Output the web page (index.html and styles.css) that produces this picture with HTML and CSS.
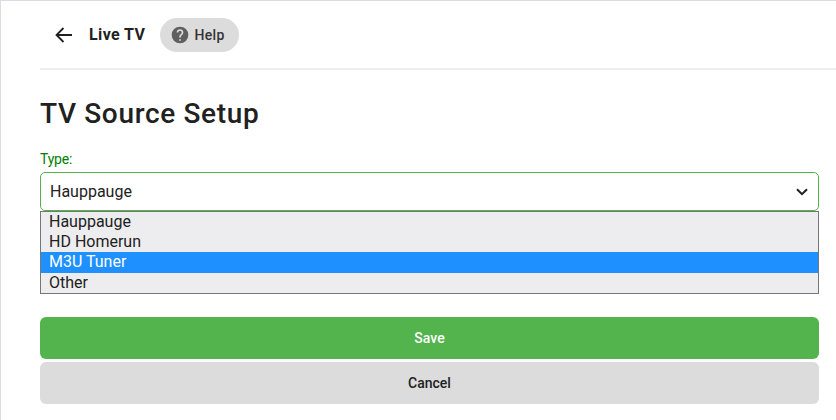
FILE: index.html
```html
<!DOCTYPE html>
<html lang="en">
<head>
<meta charset="utf-8">
<title>TV Source Setup</title>
<link rel="stylesheet" href="styles.css">
</head>
<body>
<div class="page">
  <header class="topbar">
    <button class="back" aria-label="Back">
      <svg width="24" height="24" viewBox="0 0 24 24"><path d="M20 12H4.500M11.500 5l-7 7 7 7" fill="none" stroke="#212121" stroke-width="1.8"/></svg>
    </button>
    <span class="crumb">Live TV</span>
    <button class="help">
      <svg width="20" height="20" viewBox="0 0 24 24"><path fill="#5f5f5f" d="M12 2a10 10 0 1 0 0 20 10 10 0 0 0 0-20zm1 17h-2v-2h2v2zm2.070-7.750-.9.920C13.450 12.900 13 13.500 13 15h-2v-.5c0-1.100.45-2.100 1.170-2.830l1.240-1.260c.37-.36.59-.86.59-1.410a2 2 0 0 0-4 0H8a4 4 0 0 1 8 0c0 .88-.36 1.680-.93 2.250z"/></svg>
      <span>Help</span>
    </button>
  </header>
  <main class="content">
    <h1 class="title">TV Source Setup</h1>
    <label class="type-label">Type:</label>
    <div class="select-wrap">
      <div class="select">
        <span>Hauppauge</span>
        <svg class="chevron" width="12" height="8" viewBox="0 0 12 8"><path d="M1 1.200 6 6.200l5-5" fill="none" stroke="#212121" stroke-width="2"/></svg>
      </div>
      <ul class="options">
        <li class="option">Hauppauge</li>
        <li class="option">HD Homerun</li>
        <li class="option selected">M3U Tuner</li>
        <li class="option">Other</li>
      </ul>
    </div>
    <div class="actions">
      <button class="btn save">Save</button>
      <button class="btn cancel">Cancel</button>
    </div>
  </main>
</div>
</body>
</html>
```
FILE: styles.css
```css
* { box-sizing: border-box; }
html, body { margin: 0; padding: 0; height: 100%; }
body { background: #fff; font-family: Roboto, sans-serif; color: #212121; overflow: hidden; }
.page { height: 420px; border-top: 1px solid #dcdce4; border-left: 1px solid #dcdce4; padding-left: 39px; }
.topbar { border-bottom: 2px solid #ededed; display: flex; align-items: center; padding: 0 0 0 12px; box-sizing: content-box; height: 67px; }
.back { width: 24px; height: 24px; padding: 0; border: 0; background: none; display: flex; margin-right: 13px; }
.crumb { font-size: 16px; font-weight: 700; letter-spacing: 0.4px; }
.help { margin-left: 15px; width: 79px; height: 34px; border: 0; border-radius: 17px; background: #dcdcdc; display: flex; align-items: center; gap: 4px; padding: 0 0 0 10px; font: 500 14px Roboto, sans-serif; color: #333; letter-spacing: 0.4px; }
.content { width: 779px; }
.title { margin: 27px 0 0; font-size: 28px; line-height: 34px; font-weight: 500; letter-spacing: 0.65px; color: #212121; }
.type-label { display: block; margin-top: 20px; font-size: 14px; line-height: 16px; color: #008000; letter-spacing: -0.2px; }
.select-wrap { position: relative; margin-top: 5px; }
.select { height: 39px; border: 1px solid #52b44b; border-radius: 5px; background: #fff; display: flex; align-items: center; justify-content: space-between; padding: 0 10px 0 9px; font-size: 16px; }
.options { position: absolute; left: 0; right: 0; top: 39px; margin: 0; padding: 0; list-style: none; height: 83px; border: 1px solid #767676; background: #ededf0; font-size: 16px; }
.option { height: 20px; line-height: 20px; padding-left: 8px; }
.option.selected { height: 21px; line-height: 20px; background: #1e90ff; color: #fff; }
.actions { margin-top: 106px; display: flex; flex-direction: column; gap: 3px; }
.btn { height: 42px; border: 0; border-radius: 6px; font: 500 14px Roboto, sans-serif; }
.save { background: #53b44d; color: #fff; }
.cancel { background: #dcdcdc; color: #212121; }
```
